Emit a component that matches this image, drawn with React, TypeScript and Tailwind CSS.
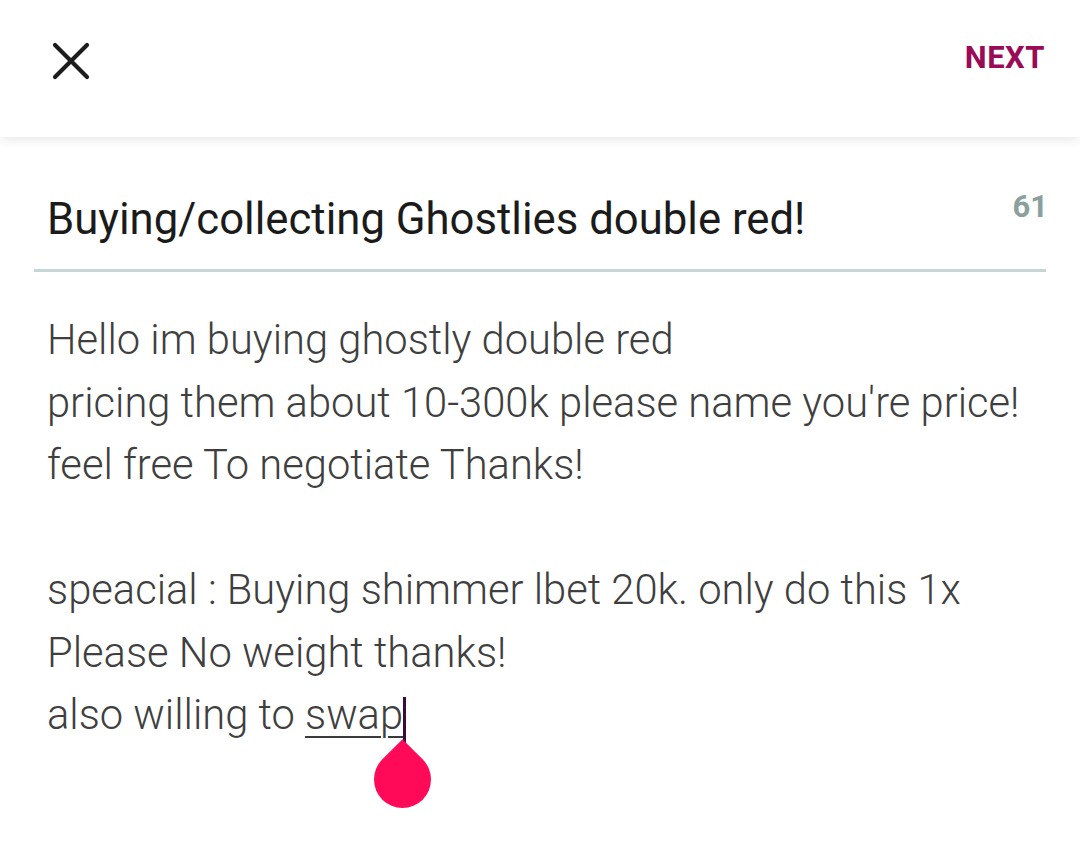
import React from 'react';

const CloseIcon: React.FC = () => (
  <svg width="38" height="38" viewBox="0 0 38 38" fill="none">
    <path d="M3 3L35 35M35 3L3 35" stroke="#1c1c1c" strokeWidth="4.2" strokeLinecap="round" />
  </svg>
);

const bodyLines = [
  'Hello im buying ghostly double red',
  "pricing them about 10-300k please name you're price!",
  'feel free To negotiate Thanks!',
  '',
  'speacial : Buying shimmer lbet 20k. only do this 1x',
  'Please No weight thanks!',
];

const App: React.FC = () => {
  return (
    <div className="w-[1080px] h-[856px] bg-white overflow-hidden" style={{ fontFamily: 'Roboto, "Noto Sans", sans-serif' }}>
      {/* top bar */}
      <div className="relative h-[137px] bg-white flex items-start justify-between pl-[52px] pr-[35px] pt-[42px] shadow-[0_3px_10px_rgba(0,0,0,0.09)] z-10">
        <CloseIcon />
        <span className="text-[31px] font-bold text-[#9a0a56] tracking-[0.5px] leading-[32px]">NEXT</span>
      </div>

      {/* title field */}
      <div className="px-[34px] pt-[52px]">
        <div className="flex items-start justify-between border-b-[3px] border-[#c5d6d3] pl-[13px] pb-[20px]">
          <span className="text-[43.7px] leading-[60px] text-[#1b1b1b] whitespace-nowrap">Buying/collecting Ghostlies double red!</span>
          <span className="text-[31px] font-bold text-[#8b9f9d] leading-[40px] -mt-[2px] mr-[-2px]">61</span>
        </div>
      </div>

      {/* body field */}
      <div className="px-[47px] pt-[37px] text-[41.7px] leading-[62.5px] font-light text-[#3f3f3f]">
        {bodyLines.map((line, i) => (
          <div key={i} className="h-[62.5px] whitespace-nowrap">{line}</div>
        ))}
        <div className="h-[62.5px] whitespace-nowrap">
          also willing to{' '}
          <span className="relative underline decoration-[2px] underline-offset-[7px] decoration-[#3a3a3a]">
            swap
            <span className="absolute right-[-3px] top-[7px] w-[3px] h-[50px] bg-[#3b0b3c]" />
            <span className="absolute right-[-28px] top-[61px] w-[57px] h-[57px] rounded-full rounded-tl-none rotate-45 bg-[#ff0a58]" />
          </span>
        </div>
      </div>
    </div>
  );
};

export default App;
